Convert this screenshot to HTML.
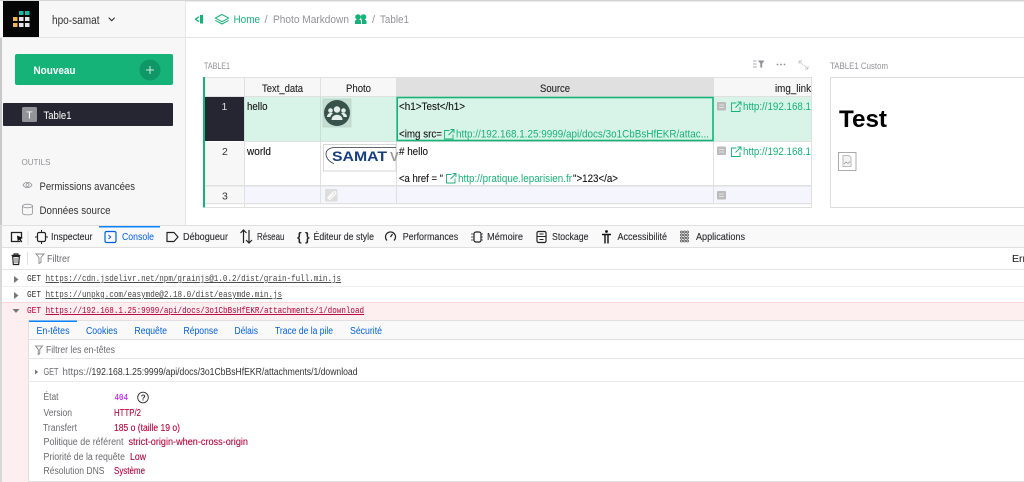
<!DOCTYPE html>
<html lang="fr"><head><meta charset="utf-8"><title>hpo-samat</title>
<style>
html,body{margin:0;padding:0;width:1024px;height:482px;overflow:hidden;background:#fff}
svg{display:block;filter:blur(.25px)}
text{font-family:"Liberation Sans",sans-serif;font-size:11px;fill:#333;white-space:pre}
.g{fill:#929299;font-size:11px}.gr{fill:#16b378;font-size:11px}.k{fill:#111;font-size:11px;stroke:#111;stroke-width:.1}.d{fill:#222;font-size:11px;stroke:#222;stroke-width:.1}
.m{font-family:"Liberation Mono",monospace;font-size:9.5px;fill:#444;text-decoration:underline}
.l{fill:#6a6a6f;font-size:10px}.r{fill:#b5003a;font-size:10px;stroke:#b5003a;stroke-width:.1}.b{fill:#0060df;font-size:10.5px}.t{fill:#2a2a2e;font-size:10.5px;stroke:#2a2a2e;stroke-width:.1}
.n{fill:none;stroke-linecap:round;stroke-linejoin:round}
</style></head><body>
<svg width="1024" height="482" viewBox="0 0 1024 482" xmlns="http://www.w3.org/2000/svg">
<rect width="1024" height="482" fill="#fff"/>
<rect y="0" width="1024" height="1.5" fill="#d4d4d4"/>
<rect x="0" y="1" width="185" height="224" fill="#f7f7f7"/>
<rect x="185" y="1" width="1" height="224" fill="#e8e8e8"/>
<rect x="0" y="37" width="1024" height="1" fill="#e4e4e4"/>
<rect x="0" y="38" width="2" height="187" fill="#c9c9c9"/>
<rect x="3" y="1" width="36" height="36" fill="#050505"/>
<g>
<rect x="19" y="11" width="4.5" height="4" fill="#16b9a6"/><rect x="25" y="11" width="4.5" height="4" fill="#16b9a6"/>
<rect x="13" y="17" width="4.5" height="4" fill="#f4b04a"/><rect x="19" y="17" width="4.5" height="4" fill="#e4e4e4"/><rect x="25" y="17" width="4.5" height="4" fill="#e4e4e4"/>
<rect x="13" y="23" width="4.5" height="4" fill="#f4b04a"/><rect x="19" y="23" width="4.5" height="4" fill="#e4e4e4"/><rect x="25" y="23" width="4.5" height="4" fill="#e4e4e4"/>
</g>
<text x="52" y="24" textLength="47.5" lengthAdjust="spacingAndGlyphs" style="font-size:11.5px">hpo-samat</text>
<path class="n" d="M109 18l2.700 2.700 2.700-2.700" stroke="#333" stroke-width="1.100"/>
<!-- breadcrumb -->
<rect x="200" y="15" width="3" height="8.500" fill="#16b378"/>
<path class="n" d="M198.500 17l-3 2.200 3 2.200" stroke="#16b378" stroke-width="1.300"/>
<path class="n" d="M222 14.500l6.700 3.600-6.700 3.600-6.700-3.600zM215.600 20.600l6.400 3.400 6.400-3.400" stroke="#16b378" stroke-width="1"/>
<text class="gr" x="233.500" y="23" textLength="26.500" lengthAdjust="spacingAndGlyphs">Home</text>
<text class="g" x="264.500" y="23">/</text>
<text class="g" x="273" y="23" textLength="76" lengthAdjust="spacingAndGlyphs">Photo Markdown</text>
<g fill="#16b378"><circle cx="358" cy="17" r="2.800"/><circle cx="363.500" cy="17" r="2.800"/><path d="M355 24v-2.500c0-1.500 1.500-2 3-2s3 .5 3 2v2.500zM362 24v-2.500c0-1 0-1.500-.5-2 2-.5 5 0 5 2v2.500z"/></g>
<text class="g" x="372" y="23">/</text>
<text class="g" x="380" y="23" textLength="29" lengthAdjust="spacingAndGlyphs">Table1</text>
<!-- sidebar -->
<rect x="15" y="54" width="158" height="31" rx="2" fill="#16b378"/>
<text x="33.500" y="74" textLength="42" lengthAdjust="spacingAndGlyphs" style="font-size:11px;font-weight:bold;fill:#fff">Nouveau</text>
<circle cx="150" cy="70" r="10.500" fill="#0f9767"/>
<path d="M146 70h8M150 66v8" stroke="#cdeee0" stroke-width="1"/>
<rect x="3" y="103" width="170" height="23" rx="1" fill="#262633"/>
<rect x="22" y="107" width="15" height="15" rx="1.500" fill="#929299"/>
<text x="26.300" y="118.500" style="font-size:10.500px;fill:#fff">T</text>
<text x="43.500" y="119" textLength="28" lengthAdjust="spacingAndGlyphs" style="fill:#fff">Table1</text>
<text x="21.500" y="165" textLength="29" lengthAdjust="spacingAndGlyphs" style="font-size:8.500px;fill:#929299">OUTILS</text>
<path class="n" d="M23 185c2-3.500 7-3.500 9 0-2 3.500-7 3.500-9 0z" stroke="#929299" stroke-width=".8"/><circle cx="27.500" cy="185" r="1.500" fill="none" stroke="#929299" stroke-width=".8"/>
<text x="39.500" y="190" textLength="95.500" lengthAdjust="spacingAndGlyphs">Permissions avancées</text>
<ellipse cx="27.500" cy="206" rx="5" ry="1.800" fill="none" stroke="#929299" stroke-width=".8"/><path d="M22.500 206v7c0 2.500 10 2.500 10 0v-7" fill="none" stroke="#929299" stroke-width=".8"/>
<text x="39.500" y="214" textLength="71" lengthAdjust="spacingAndGlyphs">Données source</text>
<!-- table title and tools -->
<text x="204" y="69" textLength="26" lengthAdjust="spacingAndGlyphs" style="font-size:9px;fill:#929299">TABLE1</text>
<path d="M758 60.500h6.500l-2.300 3v4h-1.900v-4z" fill="#929299"/><path d="M753 61h3.500M753 64h3.500M753 67h4" stroke="#929299" stroke-width=".8"/>
<g fill="#929299"><circle cx="777.500" cy="64.500" r=".9"/><circle cx="781" cy="64.500" r=".9"/><circle cx="784.500" cy="64.500" r=".9"/></g>
<path d="M799 61l4 4M799 61v3M799 61h3M808 69l-4-4M808 69v-3M808 69h-3" stroke="#bbb" stroke-width=".7" fill="none"/>
<!-- grid -->
<rect x="205" y="78" width="607" height="19" fill="#f7f7f7"/>
<rect x="397" y="78" width="317" height="19" fill="#e0e0e0"/>
<rect x="205" y="97" width="40" height="44" fill="#262633"/>
<rect x="245" y="97" width="567" height="44" fill="#d8f3e8"/>
<rect x="205" y="142" width="40" height="62" fill="#f7f7f7"/>
<rect x="245" y="186" width="567" height="18" fill="#f4f5fd"/>
<g fill="#e0e0e0">
<rect x="205" y="77" width="607" height="1"/><rect x="205" y="96" width="607" height="1"/>
<rect x="245" y="141" width="567" height="1"/><rect x="205" y="185" width="607" height="1.500"/>
<rect x="205" y="203" width="607" height="1.200"/><rect x="205" y="207" width="607" height="1"/>
<rect x="244" y="78" width="1" height="129"/><rect x="320" y="78" width="1" height="126"/><rect x="396" y="78" width="1" height="126"/><rect x="713" y="78" width="1" height="126"/><rect x="811" y="77" width="1" height="131"/>
</g>
<rect x="320" y="97" width="1" height="44" fill="#c8dfd5"/><rect x="244" y="97" width="1" height="44" fill="#c8dfd5"/>
<rect x="203" y="77" width="2" height="130.500" fill="#16b378"/>
<rect x="397.200" y="97.500" width="315.800" height="43" fill="none" stroke="#16b378" stroke-width="1.600"/>
<g>
<text class="d" x="262" y="92" textLength="41" lengthAdjust="spacingAndGlyphs">Text_data</text>
<text class="d" x="346" y="92" textLength="25" lengthAdjust="spacingAndGlyphs">Photo</text>
<text class="d" x="540" y="92" textLength="30" lengthAdjust="spacingAndGlyphs">Source</text>
<text class="d" x="775" y="92" textLength="36" lengthAdjust="spacingAndGlyphs">img_link</text>
<text x="221.500" y="110" style="font-size:10.500px;fill:#ddd">1</text>
<text x="222" y="155" style="font-size:10.500px">2</text>
<text x="222" y="199.500" style="font-size:10.500px">3</text>
<text class="k" x="247" y="110" textLength="20.500" lengthAdjust="spacingAndGlyphs">hello</text>
<text class="k" x="247" y="155" textLength="24" lengthAdjust="spacingAndGlyphs">world</text>
<text class="k" x="399" y="110" textLength="66" lengthAdjust="spacingAndGlyphs">&lt;h1&gt;Test&lt;/h1&gt;</text>
<text class="k" x="399" y="137.500" textLength="43" lengthAdjust="spacingAndGlyphs">&lt;img src=</text>
<text class="k" x="399" y="155" textLength="29" lengthAdjust="spacingAndGlyphs"># hello</text>
<text class="k" x="399" y="182" textLength="44" lengthAdjust="spacingAndGlyphs">&lt;a href = "</text>
<text class="k" x="573" y="182" textLength="45" lengthAdjust="spacingAndGlyphs">"&gt;123&lt;/a&gt;</text>
</g>
<text class="gr" x="456" y="137.500" textLength="253" lengthAdjust="spacingAndGlyphs">http://192.168.1.25:9999/api/docs/3o1CbBsHfEKR/attac...</text>
<text class="gr" x="458" y="182" textLength="114" lengthAdjust="spacingAndGlyphs">http://pratique.leparisien.fr</text>
<text class="gr" x="743" y="110" textLength="68" lengthAdjust="spacingAndGlyphs">http://192.168.1</text>
<text class="gr" x="743" y="155" textLength="68" lengthAdjust="spacingAndGlyphs">http://192.168.1</text>
<defs>
<g id="ln"><path d="M5.500 1.500H.5v8.500h8.500V5.500M4.500 6L9.500 1M6.500 .5h3.500v3.500" fill="none" stroke="#16b378" stroke-width=".9"/></g>
<g id="tx"><rect width="9" height="8.500" rx="1" fill="#bbb"/><path d="M2 3h5M2 5.500h5" stroke="#eee" stroke-width=".8"/></g>
</defs>
<use href="#ln" x="444" y="129"/><use href="#ln" x="446" y="173"/><use href="#ln" x="731" y="101.500"/><use href="#ln" x="731" y="146.500"/>
<use href="#tx" x="717" y="102"/><use href="#tx" x="717" y="146.500"/><use href="#tx" x="717" y="191"/>
<!-- photo 1 -->
<rect x="323" y="99" width="28" height="28" fill="#c5ddd2" stroke="#b7cfc4" stroke-width=".6"/>
<circle cx="337" cy="113" r="13" fill="#37524a"/>
<g fill="#e4efe9"><circle cx="337" cy="109.500" r="3.200"/><path d="M331.500 120c0-7 11-7 11 0z"/><circle cx="330.500" cy="110.500" r="2.300"/><circle cx="343.500" cy="110.500" r="2.300"/><path d="M327 117c0-4 4-5 6-3.500-1.500 1-2.500 2-2.500 3.500zM347 117c0-4-4-5-6-3.500 1.500 1 2.500 2 2.500 3.500z"/></g>
<!-- photo 2 -->
<rect x="323.500" y="144.500" width="72.500" height="26.500" fill="#fff" stroke="#ccc" stroke-width=".8"/>
<path d="M396 147.500h-61c-6 0-9 3-9 6.500s3 8 8 9.500" fill="none" stroke="#334" stroke-width=".8"/>
<text x="332" y="161" textLength="55" lengthAdjust="spacingAndGlyphs" style="font-size:14px;font-weight:bold;fill:#173f80">SAMAT</text>
<text x="390" y="161" style="font-size:13px;font-weight:bold;fill:#999">V</text>
<rect x="325" y="189" width="12.500" height="12.500" rx="1" fill="#ddd"/>
<path d="M327.500 198l6-6c1.500-1 3 .5 2 2l-5 5c-1 1-2.200 0-1.500-1l4.500-4.500" fill="none" stroke="#fff" stroke-width="1"/>
<!-- custom panel -->
<text x="830" y="69" textLength="58" lengthAdjust="spacingAndGlyphs" style="font-size:9px;fill:#929299">TABLE1 Custom</text>
<rect x="830.500" y="77.500" width="200" height="130" fill="#fff" stroke="#ddd"/>
<text x="839" y="127" textLength="48" lengthAdjust="spacingAndGlyphs" style="font-size:24px;font-weight:bold;fill:#000">Test</text>
<rect x="838.500" y="152.500" width="17.500" height="18" fill="#fff" stroke="#888" stroke-width=".7"/>
<path d="M843 155.500h6l2 2v9h-8z" fill="#f3f3f3" stroke="#aaa" stroke-width=".8"/><path d="M844 164l2-2 2 1.500 2-2" fill="none" stroke="#9a9a9a" stroke-width=".8"/>
<!-- devtools -->
<rect x="0" y="225" width="1024" height="1" fill="#e0e0e2"/>
<rect x="0" y="226" width="1024" height="21" fill="#f9f9fa"/>
<rect x="0" y="247" width="1024" height="1" fill="#e0e0e2"/>
<rect x="0" y="226" width="2" height="256" fill="#d8d8d8"/>
<rect x="99" y="226" width="61" height="1.500" fill="#0a84ff"/>
<rect x="27.500" y="231" width="1" height="14" fill="#e0e0e2"/>
<path d="M20 241.500h-8.500v-9h10v5" fill="none" stroke="#222" stroke-width="1.300"/><path d="M17 235.500l6 2.500-2.300 1 1.500 2.800-1.200.7-1.500-2.800-1.800 1.500z" fill="#111"/>
<rect x="37.500" y="232.500" width="8" height="9" rx="1.500" fill="none" stroke="#222" stroke-width="1.200"/><path d="M41.500 230v2M41.500 242v2M35 237h2.500M45.500 237h2.500" stroke="#222"/>
<text class="t" x="51" y="240" textLength="41.500" lengthAdjust="spacingAndGlyphs">Inspecteur</text>
<rect x="105" y="231.500" width="11" height="11" rx="1.500" fill="none" stroke="#0060df" stroke-width="1.200"/><path d="M108.500 235l2.200 2-2.200 2" fill="none" stroke="#0060df"/>
<text class="b" x="122" y="240" textLength="32" lengthAdjust="spacingAndGlyphs">Console</text>
<path d="M167 232.500h7l4 4.500-4 4.500h-7z" fill="none" stroke="#222" stroke-width="1.200" stroke-linejoin="round"/>
<text class="t" x="183" y="240" textLength="45" lengthAdjust="spacingAndGlyphs">Débogueur</text>
<path d="M243.500 243v-13M240.500 233l3-3 3 3M249 230v13M246 240l3 3 3-3" fill="none" stroke="#222" stroke-width="1.200"/>
<text class="t" x="257" y="240" textLength="27.500" lengthAdjust="spacingAndGlyphs">Réseau</text>
<text x="297" y="241" style="font-size:12px;fill:#222;font-weight:bold">{ }</text>
<text class="t" x="313.500" y="240" textLength="60.500" lengthAdjust="spacingAndGlyphs">Éditeur de style</text>
<path d="M387 240.500a5 5 0 1 1 7 0M390.500 237l2-3" fill="none" stroke="#222" stroke-width="1.200"/>
<text class="t" x="402.700" y="240" textLength="55.500" lengthAdjust="spacingAndGlyphs">Performances</text>
<rect x="474" y="232" width="7" height="10" rx="2" fill="none" stroke="#222" stroke-width="1.200"/><path d="M471 234h2.500M471 237h2.500M471 240h2.500M481.500 234h1.500M481.500 237h1.500M481.500 240h1.500" stroke="#333" stroke-width=".8"/>
<text class="t" x="487" y="240" textLength="36" lengthAdjust="spacingAndGlyphs">Mémoire</text>
<rect x="537" y="231.500" width="9" height="11" rx="1.500" fill="none" stroke="#222" stroke-width="1.200"/><path d="M537 236.500h9M539.500 234h4M539.500 239.500h4" stroke="#222" stroke-width=".9"/>
<text class="t" x="552" y="240" textLength="36.500" lengthAdjust="spacingAndGlyphs">Stockage</text>
<circle cx="606.500" cy="231.500" r="1.400" fill="#111"/><path d="M602 234.500h9M605 234v9.500M608 234v9.500" stroke="#111" stroke-width="1.400"/>
<text class="t" x="617.500" y="240" textLength="49.500" lengthAdjust="spacingAndGlyphs">Accessibilité</text>
<g fill="none" stroke="#444" stroke-width=".7"><circle cx="681.500" cy="232" r="1"/><circle cx="684.500" cy="232" r="1"/><circle cx="687.500" cy="232" r="1"/><circle cx="681.500" cy="235" r="1"/><circle cx="684.500" cy="235" r="1"/><circle cx="687.500" cy="235" r="1"/><circle cx="681.500" cy="238" r="1"/><circle cx="684.500" cy="238" r="1"/><circle cx="687.500" cy="238" r="1"/><circle cx="681.500" cy="241" r="1"/><circle cx="684.500" cy="241" r="1"/><circle cx="687.500" cy="241" r="1"/></g>
<text class="t" x="696" y="240" textLength="49" lengthAdjust="spacingAndGlyphs">Applications</text>
<!-- filter row -->
<path d="M11.500 255.500h9M14 255.500v-1.500h4v1.500M12.700 256.500l.6 8h5.400l.6-8z" fill="none" stroke="#222" stroke-width="1.200"/>
<path d="M15 258v5M17 258v5" stroke="#222" stroke-width=".7"/>
<rect x="27" y="252" width="1" height="13" fill="#e0e0e2"/>
<path d="M36 254h8l-3 3.500v5l-2 1v-6z" fill="none" stroke="#888" stroke-width=".9"/>
<text class="l" x="47" y="262" textLength="23" lengthAdjust="spacingAndGlyphs">Filtrer</text>
<text class="t" x="1012" y="262">Erreurs</text>
<rect x="2" y="269" width="1022" height="1" fill="#e6e6e8"/>
<rect x="2" y="286" width="1022" height="1" fill="#efeff0"/>
<rect x="2" y="302" width="1022" height="18" fill="#fdeef0"/>
<rect x="2" y="302" width="1022" height="1" fill="#fbd5da"/>
<rect x="2" y="320" width="26" height="162" fill="#fdeef0"/>
<path d="M14 276l4.500 3.500-4.500 3.500z" fill="#777"/>
<path d="M14 292l4.500 3.500-4.500 3.500z" fill="#777"/>
<path d="M12.500 309l7 0-3.500 4z" fill="#777"/>
<text x="27" y="281" textLength="14" lengthAdjust="spacingAndGlyphs" style="font-family:'Liberation Mono',monospace;font-size:9px;fill:#333">GET</text>
<text x="27" y="297" textLength="14" lengthAdjust="spacingAndGlyphs" style="font-family:'Liberation Mono',monospace;font-size:9px;fill:#333">GET</text>
<text x="27" y="313" textLength="14" lengthAdjust="spacingAndGlyphs" style="font-family:'Liberation Mono',monospace;font-size:9px;fill:#c5003a">GET</text>
<text class="m" x="45.600" y="281" textLength="295.500" lengthAdjust="spacingAndGlyphs">https://cdn.jsdelivr.net/npm/grainjs@1.0.2/dist/grain-full.min.js</text>
<text class="m" x="45.600" y="297" textLength="236.500" lengthAdjust="spacingAndGlyphs">https://unpkg.com/easymde@2.18.0/dist/easymde.min.js</text>
<text class="m" x="45.600" y="313" textLength="318.500" lengthAdjust="spacingAndGlyphs" style="fill:#b5003a">https://192.168.1.25:9999/api/docs/3o1CbBsHfEKR/attachments/1/download</text>
<!-- details -->
<rect x="28" y="320" width="996" height="162" fill="#fff"/>
<rect x="28" y="320" width="996" height="19" fill="#f9f9fa"/>
<rect x="28" y="320" width="996" height="1" fill="#e0e0e2"/>
<rect x="28" y="339" width="996" height="1" fill="#e0e0e2"/>
<rect x="28" y="320.500" width="49" height="1.500" fill="#0a84ff"/>
<rect x="28" y="320" width="1" height="162" fill="#e0e0e2"/>
<text class="b" x="36.500" y="334" textLength="33" lengthAdjust="spacingAndGlyphs" style="font-size:10px">En-têtes</text>
<text class="b" x="86" y="334" textLength="31.500" lengthAdjust="spacingAndGlyphs" style="font-size:10px">Cookies</text>
<text class="b" x="134.500" y="334" textLength="32.500" lengthAdjust="spacingAndGlyphs" style="font-size:10px">Requête</text>
<text class="b" x="183.500" y="334" textLength="34.500" lengthAdjust="spacingAndGlyphs" style="font-size:10px">Réponse</text>
<text class="b" x="234.500" y="334" textLength="23.500" lengthAdjust="spacingAndGlyphs" style="font-size:10px">Délais</text>
<text class="b" x="275" y="334" textLength="58" lengthAdjust="spacingAndGlyphs" style="font-size:10px">Trace de la pile</text>
<text class="b" x="350" y="334" textLength="32" lengthAdjust="spacingAndGlyphs" style="font-size:10px">Sécurité</text>
<path d="M35.500 346h7l-2.700 3.200v4.300l-1.600 1v-5.300z" fill="none" stroke="#777" stroke-width=".8"/>
<text class="l" x="46" y="353" textLength="69" lengthAdjust="spacingAndGlyphs">Filtrer les en-têtes</text>
<rect x="28" y="358" width="996" height="1" fill="#e6e6e8"/>
<path d="M35 369.500l3.200 2.500-3.200 2.500z" fill="#777"/>
<text class="l" x="43.500" y="375" textLength="15" lengthAdjust="spacingAndGlyphs">GET</text>
<text class="l" x="62.500" y="375" textLength="29" lengthAdjust="spacingAndGlyphs">https://</text>
<text x="91.500" y="375" textLength="266" lengthAdjust="spacingAndGlyphs" style="font-size:10px;fill:#333">192.168.1.25:9999/api/docs/3o1CbBsHfEKR/attachments/1/download</text>
<rect x="28" y="381" width="996" height="1" fill="#eaeaec"/>
<text class="l" x="43.500" y="400" textLength="15" lengthAdjust="spacingAndGlyphs">État</text>
<text x="114.500" y="400" textLength="13.500" lengthAdjust="spacingAndGlyphs" style="font-family:'Liberation Mono',monospace;font-size:9px;fill:#c026e0;stroke:#c026e0;stroke-width:.15">404</text>
<circle cx="143" cy="397.500" r="5.300" fill="none" stroke="#333" stroke-width=".9"/>
<text x="140.800" y="400.500" style="font-size:8px;fill:#333;font-weight:bold">?</text>
<text class="l" x="43.500" y="416" textLength="28.500" lengthAdjust="spacingAndGlyphs">Version</text>
<text class="r" x="114" y="416" textLength="27" lengthAdjust="spacingAndGlyphs">HTTP/2</text>
<text class="l" x="43" y="431" textLength="34" lengthAdjust="spacingAndGlyphs">Transfert</text>
<text class="r" x="114" y="431" textLength="66" lengthAdjust="spacingAndGlyphs">185 o (taille 19 o)</text>
<text class="l" x="43.500" y="445" textLength="80" lengthAdjust="spacingAndGlyphs">Politique de référent</text>
<text class="r" x="128.500" y="445" textLength="119.500" lengthAdjust="spacingAndGlyphs">strict-origin-when-cross-origin</text>
<text class="l" x="43.500" y="460" textLength="81.500" lengthAdjust="spacingAndGlyphs">Priorité de la requête</text>
<text class="r" x="130" y="460" textLength="16" lengthAdjust="spacingAndGlyphs">Low</text>
<text class="l" x="43.500" y="474" textLength="61" lengthAdjust="spacingAndGlyphs">Résolution DNS</text>
<text class="r" x="114" y="474" textLength="31" lengthAdjust="spacingAndGlyphs">Système</text>
<rect x="28" y="481" width="996" height="1" fill="#e0e0e2"/>
</svg>
</body></html>
